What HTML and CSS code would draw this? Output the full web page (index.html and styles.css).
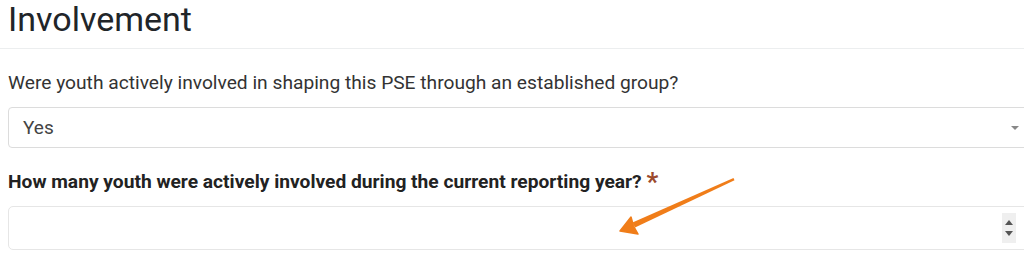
FILE: index.html
```html
<!DOCTYPE html>
<html>
<head>
<meta charset="utf-8">
<link rel="stylesheet" href="styles.css">
</head>
<body>
<div class="page">
  <h1 class="title">Involvement</h1>
  <div class="rule"></div>
  <div class="field">
    <label class="q">Were youth actively involved in shaping this PSE through an established group?</label>
    <div class="select">
      <span class="val">Yes</span>
      <span class="caret"></span>
    </div>
  </div>
  <div class="field field2">
    <label class="q bold">How many youth were actively involved during the current reporting year? <span class="req">*</span></label>
    <div class="input">
      <div class="spin">
        <span class="up"></span>
        <span class="down"></span>
      </div>
    </div>
  </div>
  <svg class="arrow" width="140" height="70" viewBox="0 0 140 70">
    <path d="M125.5 8 L126.5 10.2 L27 57.5 L24.5 52.5 Z" fill="#f07d19"/>
    <path d="M12 61 L23 47 L25.5 56 L30 64 Z" fill="#f07d19" stroke="#f07d19" stroke-width="1.5" stroke-linejoin="round"/>
  </svg>
</div>
</body>
</html>
```
FILE: styles.css
```css
html, body {
  margin: 0;
  padding: 0;
  background: #fff;
}
body {
  font-family: Roboto, "Liberation Sans", sans-serif;
  color: #333;
  overflow: hidden;
  width: 1024px;
  height: 256px;
}
.page {
  position: relative;
  width: 1040px;
}
.title {
  margin: 0;
  padding: 0 0 0 8px;
  font-size: 34px;
  font-weight: 400;
  line-height: 38px;
  color: #212529;
}
.rule {
  margin-top: 10px;
  height: 1px;
  background: #eceeef;
}
.field {
  padding-left: 8px;
  margin-top: 22px;
}
.q {
  display: block;
  font-size: 19.2px;
  line-height: 24px;
  color: #333;
}
.bold {
  font-weight: 700;
  color: #222;
}
.req {
  color: #9c4a2e;
  font-size: 26px;
  font-weight: 700;
  vertical-align: -3px;
  line-height: 20px;
}
.select {
  margin-top: 12px;
  height: 39px;
  border: 1px solid #dcdcdc;
  border-radius: 4px;
  display: flex;
  align-items: center;
  justify-content: space-between;
  padding: 0 20px 0 14px;
}
.val {
  font-size: 19px;
  color: #444;
}
.caret {
  width: 0;
  height: 0;
  border-left: 4px solid transparent;
  border-right: 4px solid transparent;
  border-top: 4px solid #888;
}
.field2 {
  margin-top: 22px;
}
.input {
  margin-top: 12px;
  height: 42px;
  border: 1px solid #e6e6e6;
  border-radius: 5px;
  display: flex;
  align-items: center;
  justify-content: flex-end;
  padding-right: 23px;
}
.spin {
  width: 14px;
  height: 30px;
  background: #efefef;
  display: flex;
  flex-direction: column;
  align-items: center;
  justify-content: center;
  gap: 6px;
}
.up {
  border-left: 4.5px solid transparent;
  border-right: 4.5px solid transparent;
  border-bottom: 5px solid #555;
}
.down {
  border-left: 4.5px solid transparent;
  border-right: 4.5px solid transparent;
  border-top: 5px solid #555;
}
.arrow {
  position: absolute;
  left: 608px;
  top: 170px;
}
```
